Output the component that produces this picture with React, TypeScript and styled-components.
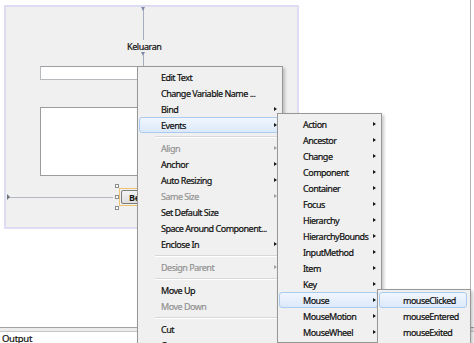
import React from "react";
import styled, { createGlobalStyle, css } from "styled-components";

const GlobalStyle = createGlobalStyle`
  html, body {
    margin: 0;
    padding: 0;
    background: #fff;
  }
  body {
    font-family: "Noto Sans", "Open Sans", sans-serif;
  }
`;

type Entry =
  | { kind: "item"; label: string; disabled?: boolean; arrow?: boolean; active?: boolean }
  | { kind: "sep" };

const item = (label: string, opts: { disabled?: boolean; arrow?: boolean; active?: boolean } = {}): Entry => ({
  kind: "item",
  label,
  ...opts,
});
const sep: Entry = { kind: "sep" };

const contextItems: Entry[] = [
  item("Edit Text"),
  item("Change Variable Name ..."),
  item("Bind", { arrow: true }),
  item("Events", { arrow: true, active: true }),
  sep,
  item("Align", { arrow: true, disabled: true }),
  item("Anchor", { arrow: true }),
  item("Auto Resizing", { arrow: true }),
  item("Same Size", { arrow: true, disabled: true }),
  item("Set Default Size"),
  item("Space Around Component..."),
  item("Enclose In", { arrow: true }),
  sep,
  item("Design Parent", { arrow: true, disabled: true }),
  sep,
  item("Move Up"),
  item("Move Down", { disabled: true }),
  sep,
  item("Cut"),
  item("Copy"),
];

const eventItems: Entry[] = [
  "Action",
  "Ancestor",
  "Change",
  "Component",
  "Container",
  "Focus",
  "Hierarchy",
  "HierarchyBounds",
  "InputMethod",
  "Item",
  "Key",
  "Mouse",
  "MouseMotion",
  "MouseWheel",
].map((label) => item(label, { arrow: true, active: label === "Mouse" }));

const mouseItems: Entry[] = [
  item("mouseClicked", { active: true }),
  item("mouseEntered"),
  item("mouseExited"),
  item("mousePressed"),
];

const Screen = styled.div`
  position: relative;
  width: 474px;
  height: 343px;
  overflow: hidden;
  background: #fff;
  display: flex;
  flex-direction: column;
`;

const Workspace = styled.div`
  box-sizing: border-box;
  flex-shrink: 0;
  width: 471px;
  height: 327px;
  padding: 5px 0 0 4px;
  border-right: 1px solid #b4b4b4;
`;

const FormFrame = styled.div`
  position: relative;
  box-sizing: border-box;
  width: 295px;
  height: 224px;
  border: 2px solid #dedcf2;
  background: #f0f0f0;
`;

const VGuide = styled.div<{ $top: number; $height: number }>`
  position: absolute;
  left: 137px;
  top: ${(p) => p.$top}px;
  width: 1px;
  height: ${(p) => p.$height}px;
  background: #a5adbf;
`;

const DownMarker = styled.div<{ $top: number }>`
  position: absolute;
  left: 135px;
  top: ${(p) => p.$top}px;
  width: 0;
  height: 0;
  border-top: 4px solid #7f8ba6;
  border-left: 2.5px solid transparent;
  border-right: 2.5px solid transparent;
`;

const HGuide = styled.div`
  position: absolute;
  left: 3px;
  top: 190px;
  width: 104px;
  height: 1px;
  background: #b5b8c2;
`;

const RightMarker = styled.div`
  position: absolute;
  left: 1px;
  top: 187px;
  width: 0;
  height: 0;
  border-left: 3px solid #6d7380;
  border-top: 3px solid transparent;
  border-bottom: 3px solid transparent;
`;

const Caption = styled.div`
  position: absolute;
  left: 121px;
  top: 34px;
  font-size: 9px;
  line-height: 12px;
  letter-spacing: -0.4px;
  color: #111;
  white-space: nowrap;
  -webkit-text-stroke: 0.2px #111;
`;

const TextField = styled.div`
  position: absolute;
  left: 34px;
  top: 59px;
  box-sizing: border-box;
  width: 130px;
  height: 14px;
  background: #fff;
  border: 1px solid #b6b9bd;
  border-top-color: #9da1a6;
`;

const TextArea = styled.div`
  position: absolute;
  left: 34px;
  top: 100px;
  box-sizing: border-box;
  width: 130px;
  height: 69px;
  background: #fff;
  border: 1px solid #9a9c9e;
`;

const SelectionRing = styled.div`
  position: absolute;
  left: 113px;
  top: 181px;
  box-sizing: border-box;
  width: 22px;
  height: 18px;
  padding: 1px;
  border: 1px solid #efc46e;
  border-right: none;
  overflow: hidden;
`;

const ButtonFace = styled.div`
  box-sizing: border-box;
  width: 40px;
  height: 100%;
  display: flex;
  align-items: center;
  padding-left: 7px;
  border: 1px solid #7a7a7a;
  border-radius: 2px;
  background: linear-gradient(#f4f4f4, #dedede);
  font-size: 9px;
  font-weight: 700;
  letter-spacing: -0.3px;
  color: #1a1a1a;
  overflow: hidden;
`;

const Handle = styled.div<{ $top: number }>`
  position: absolute;
  left: 109px;
  top: ${(p) => p.$top}px;
  box-sizing: border-box;
  width: 4px;
  height: 4px;
  border: 1px solid #8c8c8c;
  background: #fff;
`;

const OutputBar = styled.div`
  flex: 1;
  border-top: 1px solid #a3a3a3;
  background: #fff;
`;

const OutputRule = styled.div`
  height: 3px;
  background: #ececec;
  border-bottom: 1px solid #c6c6c6;
`;

const OutputTitle = styled.div`
  padding: 1px 0 0 2px;
  font-size: 9.5px;
  line-height: 12px;
  letter-spacing: -0.3px;
  color: #111;
  -webkit-text-stroke: 0.2px #111;
`;

const Menu = styled.div<{ $left: number; $top: number; $width: number }>`
  position: absolute;
  left: ${(p) => p.$left}px;
  top: ${(p) => p.$top}px;
  width: ${(p) => p.$width}px;
  box-sizing: border-box;
  display: flex;
  flex-direction: column;
  padding: 2px 0;
  background: #f0f0f0;
  border: 1px solid #979797;
  box-shadow: 2px 2px 3px rgba(0, 0, 0, 0.22);
`;

const Item = styled.div<{ $indent: number; $disabled?: boolean; $active?: boolean }>`
  flex-shrink: 0;
  display: flex;
  align-items: center;
  box-sizing: border-box;
  height: 16px;
  margin: 0 3px 0 1px;
  padding-left: ${(p) => p.$indent}px;
  border: 1px solid transparent;
  border-radius: 3px;
  font-size: 9px;
  letter-spacing: -0.5px;
  white-space: nowrap;
  color: ${(p) => (p.$disabled ? "#8f8f8f" : "#0e0e0e")};
  -webkit-text-stroke: 0.2px ${(p) => (p.$disabled ? "#9a9a9a" : "#0e0e0e")};
  ${(p) =>
    p.$active &&
    css`
      border-color: #a9cbf0;
      background: linear-gradient(#f1f6fd, #dce9fa);
    `}
`;

const Arrow = styled.span<{ $disabled?: boolean }>`
  flex-shrink: 0;
  margin-left: auto;
  margin-right: 1.5px;
  width: 0;
  height: 0;
  border-left: 3px solid ${(p) => (p.$disabled ? "#a3a3a3" : "#1a1a1a")};
  border-top: 2.5px solid transparent;
  border-bottom: 2.5px solid transparent;
`;

const Separator = styled.div`
  flex-shrink: 0;
  height: 1px;
  margin: 3px 4px 2px 17px;
  background: #d8d8d8;
  border-bottom: 1px solid #fff;
`;

interface PopupProps {
  left: number;
  top: number;
  width: number;
  indent: number;
  entries: Entry[];
}

const Popup = ({ left, top, width, indent, entries }: PopupProps) => (
  <Menu $left={left} $top={top} $width={width}>
    {entries.map((e, i) =>
      e.kind === "sep" ? (
        <Separator key={i} />
      ) : (
        <Item key={i} $indent={indent} $disabled={e.disabled} $active={e.active}>
          {e.label}
          {e.arrow && <Arrow $disabled={e.disabled} />}
        </Item>
      )
    )}
  </Menu>
);

export default function App() {
  return (
    <Screen>
      <GlobalStyle />
      <Workspace>
        <FormFrame>
          <VGuide $top={0} $height={33} />
          <DownMarker $top={0} />
          <Caption>Keluaran</Caption>
          <DownMarker $top={45} />
          <VGuide $top={48} $height={11} />
          <TextField />
          <TextArea />
          <HGuide />
          <RightMarker />
          <SelectionRing>
            <ButtonFace>Bersihkan</ButtonFace>
          </SelectionRing>
          <Handle $top={177} />
          <Handle $top={188} />
          <Handle $top={199} />
        </FormFrame>
      </Workspace>
      <OutputBar>
        <OutputRule />
        <OutputTitle>Output</OutputTitle>
      </OutputBar>
      <Popup left={137} top={66} width={146} indent={21} entries={contextItems} />
      <Popup left={277} top={113} width={105} indent={23} entries={eventItems} />
      <Popup left={377} top={289} width={94} indent={23} entries={mouseItems} />
    </Screen>
  );
}
